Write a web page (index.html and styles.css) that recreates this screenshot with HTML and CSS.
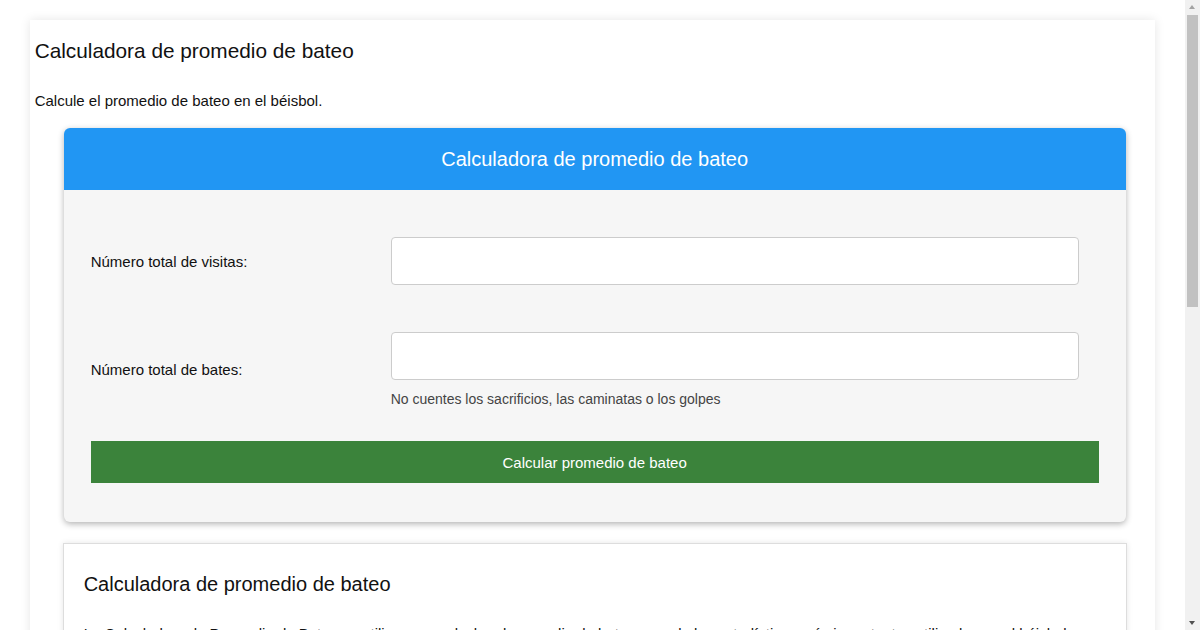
FILE: index.html
```html
<!DOCTYPE html>
<html lang="es">
<head>
<meta charset="utf-8">
<title>Calculadora de promedio de bateo</title>
<link rel="stylesheet" href="styles.css">
</head>
<body>
<div class="page">
  <h1 class="page-title">Calculadora de promedio de bateo</h1>
  <p class="intro">Calcule el promedio de bateo en el béisbol.</p>

  <div class="calc">
    <div class="calc-head">Calculadora de promedio de bateo</div>
    <div class="calc-body">
      <div class="row">
        <label class="row-label">Número total de visitas:</label>
        <div class="row-field">
          <input class="field" type="text">
        </div>
      </div>
      <div class="row">
        <label class="row-label">Número total de bates:</label>
        <div class="row-field">
          <input class="field" type="text">
          <div class="hint">No cuentes los sacrificios, las caminatas o los golpes</div>
        </div>
      </div>
      <button class="calc-btn" type="button">Calcular promedio de bateo</button>
    </div>
  </div>

  <div class="article">
    <h2 class="article-title">Calculadora de promedio de bateo</h2>
    <p class="article-text">La Calculadora de Promedio de Bateo se utiliza para calcular el promedio de bateo, una de las estadísticas más importantes utilizadas en el béisbol para medir el rendimiento de un bateador. El promedio de bateo se obtiene dividiendo el número total de hits entre el número total de turnos al bate.</p>
    <p class="article-text">Para usar la calculadora, introduzca el número total de hits y el número total de turnos al bate del jugador. No cuente los sacrificios, las bases por bolas ni los golpes recibidos.</p>
  </div>
</div>

<div class="scrollbar" aria-hidden="true">
  <span class="sb-arrow sb-up"></span>
  <span class="sb-thumb"></span>
  <span class="sb-arrow sb-down"></span>
</div>
</body>
</html>
```

FILE: styles.css
```css
html, body {
  margin: 0;
  padding: 0;
  background: #ffffff;
  font-family: "Liberation Sans", Arial, sans-serif;
  color: #111;
}

body {
  padding-right: 15px;
}

.page {
  width: 95%;
  margin: 20px auto;
  padding: 18px 5px 40px;
  box-sizing: border-box;
  background: #fff;
  box-shadow: 0 0 10px rgba(0, 0, 0, 0.1);
}

.page-title {
  margin: 0;
  font-size: 20.8px;
  font-weight: normal;
  line-height: 26px;
}

.intro {
  margin: 28px 0 0;
  font-size: 15px;
  line-height: 18px;
}

.calc {
  width: 1062px;
  margin: 18px 0 0 29px;
  border-radius: 6px;
  overflow: hidden;
  background: #f6f6f6;
  box-shadow: 0 2px 6px rgba(0, 0, 0, 0.3);
}

.calc-head {
  height: 62px;
  background: #2196f3;
  color: #fff;
  font-size: 20px;
  display: flex;
  align-items: center;
  justify-content: center;
}

.calc-body {
  padding: 24px 27px 39px;
}

.row {
  display: flex;
  align-items: center;
  padding: 23px 0 24px;
}

.row-label {
  width: 300px;
  flex: none;
  font-size: 15px;
  line-height: 17px;
}

.row-field {
  flex: 1;
}

.field {
  display: block;
  width: calc(100% - 20px);
  height: 48px;
  box-sizing: border-box;
  border: 1px solid #cccccc;
  border-radius: 4px;
  background: #fff;
  font-size: 15px;
  padding: 0 10px;
}

.hint {
  margin-top: 12px;
  font-size: 14px;
  line-height: 15px;
  color: #444;
}

.calc-btn {
  display: block;
  width: 100%;
  height: 42px;
  margin-top: 10px;
  border: none;
  background: #3b833b;
  color: #fff;
  font-family: "Liberation Sans", Arial, sans-serif;
  font-size: 15px;
}

.article {
  width: 1064px;
  box-sizing: border-box;
  margin: 21px 0 0 28px;
  padding: 28px 20px 20px;
  border: 1px solid #dddddd;
  background: #fff;
  box-shadow: 0 0 6px rgba(0, 0, 0, 0.1);
}

.article-title {
  margin: 0;
  font-size: 20px;
  font-weight: normal;
  line-height: 24px;
}

.article-text {
  margin: 26px 0 0;
  font-size: 15px;
  line-height: 24px;
}

.scrollbar {
  position: fixed;
  top: 0;
  right: 0;
  width: 15px;
  height: 100%;
  background: #f1f1f1;
}

.sb-thumb {
  position: absolute;
  top: 15px;
  left: 2px;
  width: 11px;
  height: 292px;
  background: #c1c1c1;
}

.sb-arrow {
  position: absolute;
  left: 4px;
  width: 0;
  height: 0;
  border-left: 3.5px solid transparent;
  border-right: 3.5px solid transparent;
}

.sb-up {
  top: 5px;
  border-bottom: 4px solid #a3a3a3;
}

.sb-down {
  bottom: 5px;
  border-top: 4px solid #505050;
}
```
